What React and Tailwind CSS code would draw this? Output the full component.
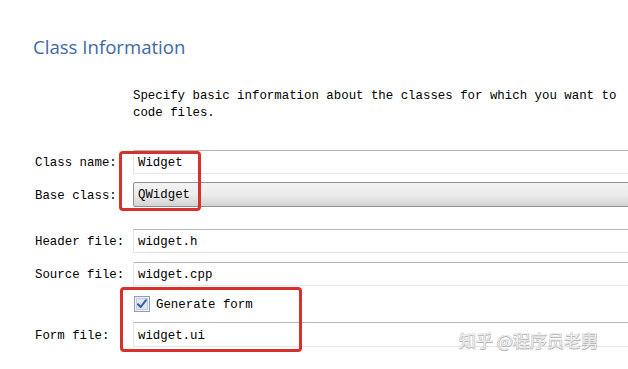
import React from 'react'

const mono = { fontFamily: '"Liberation Mono", "DejaVu Sans Mono", monospace' }

function Field({ label, value, className = '' }) {
  return (
    <div className={`flex items-center ${className}`}>
      <div className="w-[133px] shrink-0 pl-[35px] pt-[3px] text-[12.4px] text-black whitespace-nowrap">{label}</div>
      <div className="h-full w-[520px] shrink-0 flex items-center pl-[4px] pt-[3px] border border-[#e2e6ea] border-t-[#b4b6ba] bg-white text-[12.4px] text-black">
        {value}
      </div>
    </div>
  )
}

function CheckIcon() {
  return (
    <svg width="16" height="16" viewBox="0 0 16 16">
      <rect x="0.5" y="0.5" width="15" height="15" fill="#eef1f6" stroke="#8f9fb8" />
      <rect x="2.5" y="2.5" width="11" height="11" fill="#dfe6f0" stroke="#c3ccd9" />
      <path d="M4 8.2 L6.7 11 L12 4.2" fill="none" stroke="#3a57a8" strokeWidth="2" strokeLinecap="round" strokeLinejoin="round" />
    </svg>
  )
}

export default function App() {
  return (
    <div className="relative w-[628px] h-[369px] overflow-hidden bg-white" style={mono}>
      <div className="pl-[33px] pt-[35px] text-[18.6px] leading-[24px] text-[#3b6aa8]" style={{ fontFamily: '"Open Sans", "Noto Sans", sans-serif' }}>
        Class Information
      </div>

      <div className="pl-[133px] mt-[29px] text-[12.4px] leading-[17px] text-black whitespace-nowrap">
        <div>Specify basic information about the classes for which you want to</div>
        <div>code files.</div>
      </div>

      <div className="mt-[28px] flex flex-col">
        <Field label="Class name:" value="Widget" className="h-[24px]" />
        <div className="mt-[8px] h-[25px] flex items-center">
          <div className="w-[133px] shrink-0 pl-[35px] pt-[3px] text-[12.4px] text-black whitespace-nowrap">Base class:</div>
          <div className="h-full w-[520px] shrink-0 flex items-center pl-[4px] pt-[2px] rounded-[2px] border border-[#8f9092] bg-gradient-to-b from-[#f3f3f3] via-[#ececec] to-[#d3d3d3] text-[12.4px] text-black">
            QWidget
          </div>
        </div>
        <Field label="Header file:" value="widget.h" className="mt-[22px] h-[24px]" />
        <Field label="Source file:" value="widget.cpp" className="mt-[9px] h-[24px]" />
        <div className="h-[36px] flex items-center pl-[134px] gap-[6px]">
          <CheckIcon />
          <span className="pt-[2px] text-[12.4px] text-black">Generate form</span>
        </div>
        <Field label="Form file:" value="widget.ui" className="h-[25px]" />
      </div>

      <div className="absolute left-[119px] top-[151px] w-[82px] h-[60px] rounded-[4px] border-[3px] border-[#d8302c]" />
      <div className="absolute left-[120px] top-[287px] w-[182px] h-[65px] rounded-[4px] border-[3px] border-[#d8302c]" />

      <div
        className="absolute left-[459px] top-[329px] text-[17px] leading-[22px] text-[#eeeeee] whitespace-nowrap"
        style={{
          fontFamily: '"Noto Sans CJK SC", "Noto Sans", sans-serif',
          textShadow: '0.5px 0.5px 0 #b8b8b8, -0.5px -0.5px 0 #d0d0d0, 0.5px -0.5px 0 #d0d0d0, -0.5px 0.5px 0 #c4c4c4',
        }}
      >
        知乎 @程序员老舅
      </div>
    </div>
  )
}
